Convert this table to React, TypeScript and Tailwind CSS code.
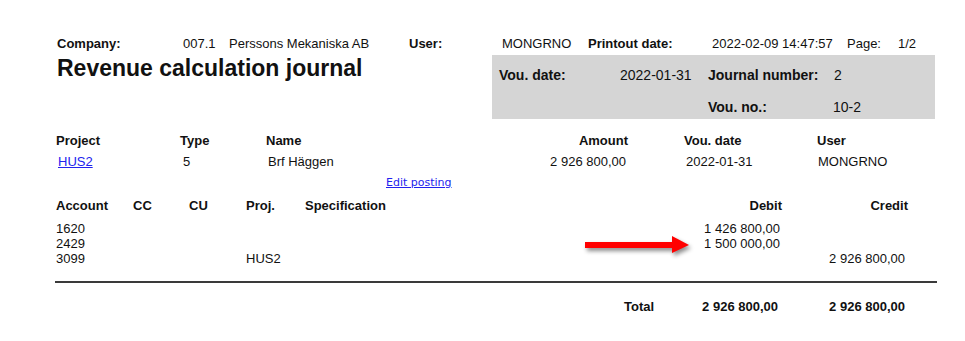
import React from "react";

export default function App() {
  return (
    <div
      className="relative w-[965px] h-[341px] overflow-hidden bg-white text-[#111] text-[13px]"
      style={{ fontFamily: '"Liberation Sans", Arial, sans-serif' }}
    >
      <div className="flex flex-col pl-[57px] pt-[36px]">
        {/* Row 1 */}
        <div className="flex h-[15px] items-center leading-[15px] whitespace-nowrap">
          <span className="w-[126px] font-bold">Company:</span>
          <span className="w-[46px]">007.1</span>
          <span className="w-[180px]">Perssons Mekaniska AB</span>
          <span className="w-[93px] font-bold">User:</span>
          <span className="w-[86px]">MONGRNO</span>
          <span className="w-[124px] font-bold">Printout date:</span>
          <span className="w-[135px]">2022-02-09 14:47:57</span>
          <span className="w-[51px]">Page:</span>
          <span>1/2</span>
        </div>

        {/* Row 2: title + grey box */}
        <div className="mt-[4px] flex">
          <div className="w-[435px] pt-[2px]">
            <h1 className="text-[23px] leading-[23px] font-bold">Revenue calculation journal</h1>
          </div>
          <div className="w-[443px] h-[64px] bg-[#d5d5d5] pl-[7px] pt-[12px] text-[14px] leading-[16px] whitespace-nowrap">
            <div className="flex">
              <span className="w-[121px] font-bold">Vou. date:</span>
              <span className="w-[88px]">2022-01-31</span>
              <span className="w-[126px] font-bold">Journal number:</span>
              <span>2</span>
            </div>
            <div className="mt-[16px] flex">
              <span className="w-[209px]" />
              <span className="w-[125px] font-bold">Vou. no.:</span>
              <span>10-2</span>
            </div>
          </div>
        </div>

        {/* Section: project */}
        <div className="mt-[12px] flex h-[20px] items-center font-bold whitespace-nowrap -ml-[1px]">
          <span className="w-[124px]">Project</span>
          <span className="w-[86px]">Type</span>
          <span className="w-[200px]">Name</span>
          <span className="w-[162px] text-right">Amount</span>
          <span className="w-[56px]" />
          <span className="w-[133px]">Vou. date</span>
          <span>User</span>
        </div>
        <div className="flex h-[21px] items-center whitespace-nowrap -ml-[1px]">
          <span className="w-[124px] pl-[2px]">
            <a href="#" className="text-[#2222ee] underline">HUS2</a>
          </span>
          <span className="w-[86px] pl-[3px]">5</span>
          <span className="w-[200px] pl-[2px]">Brf Häggen</span>
          <span className="w-[162px] pr-[2px] text-right">2 926 800,00</span>
          <span className="w-[56px]" />
          <span className="w-[133px] pl-[2px]">2022-01-31</span>
          <span className="pl-[1px]">MONGRNO</span>
        </div>
        <div className="flex h-[20px] items-center pl-[329px]">
          <a
            href="#"
            className="text-[11px] leading-[13px] text-[#2222ee] underline"
            style={{ fontFamily: '"DejaVu Sans", Verdana, sans-serif' }}
          >
            Edit posting
          </a>
        </div>

        {/* Section: accounts */}
        <div className="mt-[4px] flex h-[20px] items-center font-bold whitespace-nowrap -ml-[1px]">
          <span className="w-[77px]">Account</span>
          <span className="w-[56px]">CC</span>
          <span className="w-[57px]">CU</span>
          <span className="w-[59px]">Proj.</span>
          <span className="w-[327px]">Specification</span>
          <span className="w-[150px] text-right">Debit</span>
          <span className="w-[126px] text-right">Credit</span>
        </div>
        <div className="mt-[5px] flex flex-col leading-[15px] whitespace-nowrap -ml-[1px]">
          {[
            { acc: "1620", proj: "", debit: "1 426 800,00", credit: "" },
            { acc: "2429", proj: "", debit: "1 500 000,00", credit: "" },
            { acc: "3099", proj: "HUS2", debit: "", credit: "2 926 800,00" },
          ].map((r) => (
            <div key={r.acc} className="flex h-[15px] items-center">
              <span className="w-[77px]">{r.acc}</span>
              <span className="w-[56px]" />
              <span className="w-[57px]" />
              <span className="w-[59px]">{r.proj}</span>
              <span className="w-[327px]" />
              <span className="w-[150px] pr-[2px] text-right">{r.debit}</span>
              <span className="w-[126px] pr-[3px] text-right">{r.credit}</span>
            </div>
          ))}
        </div>

        {/* Rule */}
        <div className="mt-[15px] -ml-[2px] w-[882px] h-[2px] bg-[#3a3a3a]" />

        {/* Total */}
        <div className="mt-[14px] flex h-[20px] items-center font-bold whitespace-nowrap">
          <span className="w-[567px]" />
          <span className="w-[36px]">Total</span>
          <span className="w-[120px] pr-[2px] text-right">2 926 800,00</span>
          <span className="w-[125px] text-right">2 926 800,00</span>
        </div>
      </div>

      {/* Red arrow annotation */}
      <svg
        className="absolute left-[583px] top-[234px] drop-shadow-[2px_3px_2px_rgba(0,0,0,0.45)]"
        width="110"
        height="22"
        viewBox="0 0 110 22"
      >
        <rect x="2" y="8" width="88" height="6" fill="#ff0000" />
        <polygon points="89,2 106,11 89,19" fill="#ff0000" />
      </svg>
    </div>
  );
}
